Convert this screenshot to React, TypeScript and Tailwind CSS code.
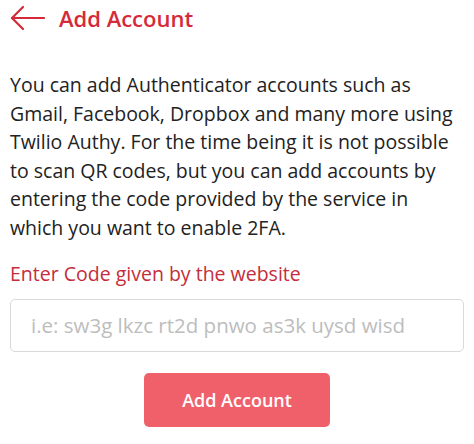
export default function App() {
  return (
    <div className="w-[474px] h-[444px] bg-white font-['Open_Sans',sans-serif] overflow-hidden">
      {/* header */}
      <div className="flex items-center h-[36px] pl-[10px]">
        <svg width="35" height="26" viewBox="0 0 35 26" fill="none" stroke="#d42a3a" strokeWidth="2.2" strokeLinecap="round" strokeLinejoin="round">
          <path d="M34 13H2" />
          <path d="M13 2L2 13l11 11" />
        </svg>
        <h1 className="ml-[14px] text-[22px] font-semibold text-[#d42a3a] leading-none">Add Account</h1>
      </div>

      <p className="mt-[35px] px-[10px] text-[19.5px] leading-[28.5px] text-[#222]">
        You can add Authenticator accounts such as Gmail, Facebook, Dropbox and many more using Twilio Authy. For the time being it is not possible to scan QR codes, but you can add accounts by entering the code provided by the service in which you want to enable 2FA.
      </p>

      <div className="mt-[19px] px-[10px] text-[19.5px] leading-[26px] text-[#c42d3c]">
        Enter Code given by the website
      </div>

      <div className="mx-[10px] mt-[12px] h-[53px] border border-[#d9d9d9] rounded-[5px] flex items-center pl-[20px]">
        <input
          className="w-full outline-none bg-transparent text-[20.5px] placeholder:text-[#bdbdbd]"
          placeholder="i.e: sw3g lkzc rt2d pnwo as3k uysd wisd"
        />
      </div>

      <div className="flex justify-center mt-[21px]">
        <button className="w-[186px] h-[54px] rounded-[5px] bg-[#f0606a] text-white text-[18px] font-semibold">
          Add Account
        </button>
      </div>
    </div>
  );
}
